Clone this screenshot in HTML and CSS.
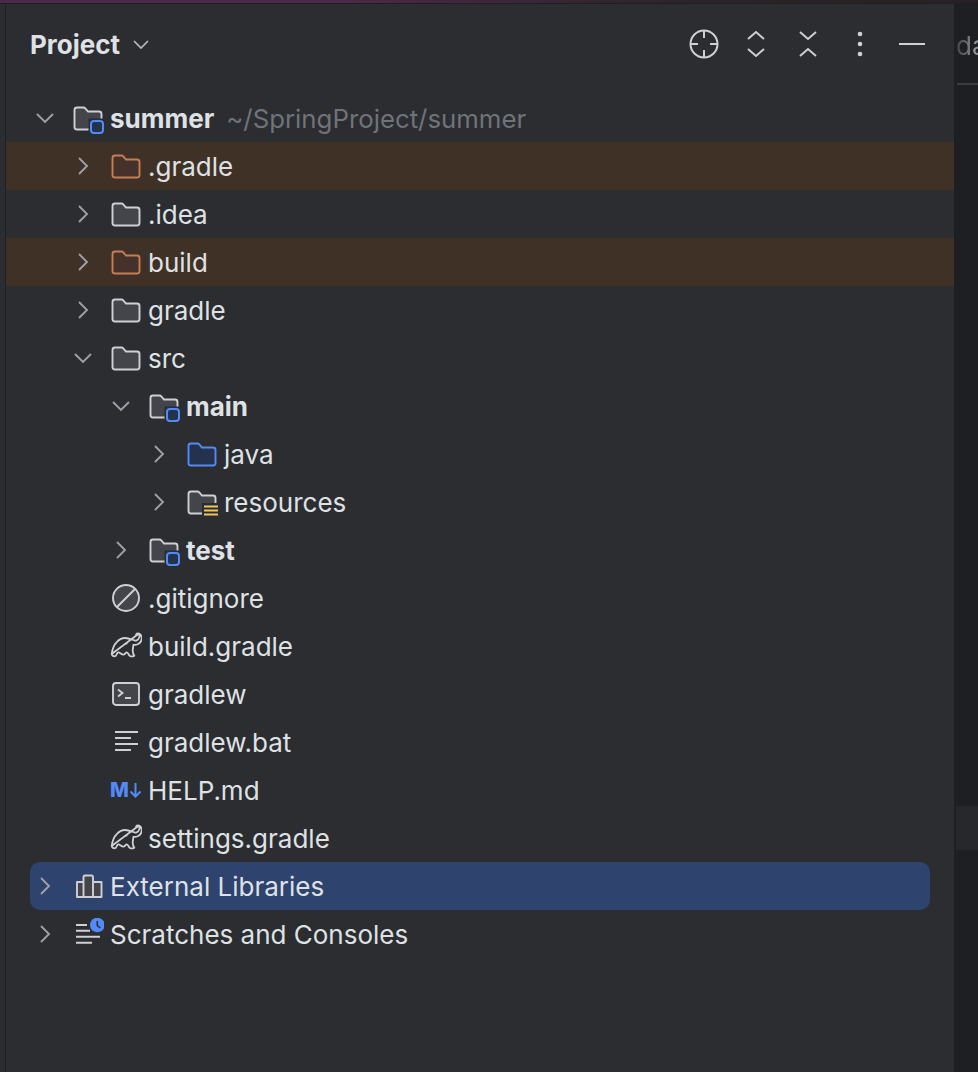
FILE: index.html
```html
<!DOCTYPE html>
<html lang="en">
<head>
<meta charset="utf-8">
<title>Project</title>
<link rel="stylesheet" href="styles.css">
</head>
<body>
<svg class="defs" width="0" height="0" aria-hidden="true">
  <defs>
    <path id="folder-shape" d="M2.500 8C2.500 6.600 3.600 5.500 5 5.500H11.500C12.200 5.500 12.800 5.800 13.300 6.300L16 9.500H27C28.400 9.500 29.500 10.600 29.500 12V25C29.500 26.400 28.400 27.500 27 27.500H5C3.600 27.500 2.500 26.400 2.500 25Z"/>
    <symbol id="i-folder" viewBox="0 0 32 32"><use href="#folder-shape" fill="#43454a" stroke="#ced0d6" stroke-width="1.900"/></symbol>
    <symbol id="i-folder-ex" viewBox="0 0 32 32"><use href="#folder-shape" fill="#45322b" stroke="#c77d55" stroke-width="1.900"/></symbol>
    <symbol id="i-folder-src" viewBox="0 0 32 32"><use href="#folder-shape" fill="#25324d" stroke="#548af7" stroke-width="1.900"/></symbol>
    <symbol id="i-module" viewBox="0 0 32 32">
      <use href="#folder-shape" fill="#43454a" stroke="#ced0d6" stroke-width="1.900"/>
      <rect x="16.500" y="16.500" width="17" height="17" fill="#2b2d30"/>
      <rect x="19" y="19" width="12" height="12" rx="3" fill="#25324d" stroke="#548af7" stroke-width="2"/>
    </symbol>
    <symbol id="i-res" viewBox="0 0 32 32">
      <use href="#folder-shape" fill="#43454a" stroke="#ced0d6" stroke-width="1.900"/>
      <rect x="16" y="17" width="18" height="17" fill="#2b2d30"/>
      <path d="M18 20.500H32M18 24.500H32M18 28.500H32" stroke="#f2c55c" stroke-width="2" fill="none"/>
    </symbol>
    <symbol id="i-ignore" viewBox="0 0 32 32">
      <circle cx="16" cy="16" r="13" fill="#43454a" stroke="#ced0d6" stroke-width="1.900"/>
      <path d="M7 25L25 7" stroke="#ced0d6" stroke-width="1.900"/>
    </symbol>
    <symbol id="i-gradle" viewBox="0 0 32 32">
      <path d="M1.700 24C2.500 19 4 14.500 6.700 12.300C9 9.500 12 8 15 8C18 8 20.500 9 23.300 10C25.500 11 28 11 29.300 7.300C29.800 5 28.800 3.300 27.700 3.300C27 3.300 26.300 3.800 26 4.700M29 3.500C30.500 4 31.700 6.500 31.700 9C31.700 11.500 30 13 28.300 14C26.500 15 25 15 23.300 15C23.300 17 22.700 19 22.700 20.700C22.700 22.500 23.500 24.500 24.300 25.700C22.500 26.800 21 26.500 20 26C18.500 25 18 22.300 16.700 22.300C15.500 22.300 15 24.700 13.300 24.700C11.500 24.700 10 22.300 8.300 22.300C7 22.300 6.500 26.300 5 26.300C3.500 26.300 2 25.500 1.700 24Z" fill="none" stroke="#ced0d6" stroke-width="1.800" stroke-linejoin="round" stroke-linecap="round"/>
      <circle cx="16.500" cy="13.500" r="1" fill="#ced0d6"/>
    </symbol>
    <symbol id="i-term" viewBox="0 0 32 32">
      <rect x="3" y="5" width="26" height="22" rx="3" fill="#43454a" stroke="#ced0d6" stroke-width="1.900"/>
      <path d="M8 11.500L12.500 15L8 18.500M15 20H21" fill="none" stroke="#ced0d6" stroke-width="1.900"/>
    </symbol>
    <symbol id="i-text" viewBox="0 0 32 32">
      <path d="M5 6H28M5 12H21M5 18H28M5 24H21" fill="none" stroke="#ced0d6" stroke-width="1.900"/>
    </symbol>
    <symbol id="i-md" viewBox="0 0 32 32">
      <path d="M25.500 9V22M20.500 17.500L25.500 22.500L30.500 17.500" fill="none" stroke="#548af7" stroke-width="2"/>
    </symbol>
    <symbol id="i-lib" viewBox="0 0 32 32">
      <path d="M5 12H11.500V27H5ZM11.500 7C11.500 6 12.500 5.500 13 5.500H19.500C20.500 5.500 21 6 21 7V27H11.500ZM21 12H29.500V27H21Z" fill="#43454a" stroke="#ced0d6" stroke-width="1.900" stroke-linejoin="round"/>
    </symbol>
    <symbol id="i-scratch" viewBox="0 0 32 32">
      <path d="M4 7H15M4 12.700H18M4 18.700H28M4 24.700H20" fill="none" stroke="#ced0d6" stroke-width="1.900"/>
      <circle cx="25.300" cy="7" r="7.300" fill="#548af7"/>
      <path d="M25.300 3V7.500L28.300 10" fill="none" stroke="#2b2d30" stroke-width="1.600"/>
    </symbol>
    <symbol id="c-right" viewBox="0 0 24 24"><path d="M8 4L16 12L8 20" fill="none" stroke="#9da0a8" stroke-width="1.900"/></symbol>
    <symbol id="c-down" viewBox="0 0 24 24"><path d="M4 8L12 16L20 8" fill="none" stroke="#9da0a8" stroke-width="1.900"/></symbol>
  </defs>
</svg>

<div class="strip-top"></div>
<div class="window">
  <div class="strip-left"></div>
  <main class="panel">
    <header class="head">
      <div class="head-title">
        <span class="title">Project</span>
        <svg class="title-caret" viewBox="0 0 16 10"><path d="M1 1L8 8L15 1" fill="none" stroke="#b4b8bf" stroke-width="1.700"/></svg>
      </div>
      <div class="tools">
        <svg class="tool" viewBox="0 0 32 32"><circle cx="16" cy="16" r="13.500" fill="none" stroke="#ced0d6" stroke-width="2"/><path d="M16 2.500V10M16 22V29.500M2.500 16H10M22 16H29.500" stroke="#ced0d6" stroke-width="2" fill="none"/></svg>
        <svg class="tool" viewBox="0 0 32 32"><path d="M8 11L16 4L24 11M8 21L16 28L24 21" fill="none" stroke="#ced0d6" stroke-width="2"/></svg>
        <svg class="tool" viewBox="0 0 32 32"><path d="M8 4L16 11L24 4M8 28L16 21L24 28" fill="none" stroke="#ced0d6" stroke-width="2"/></svg>
        <svg class="tool" viewBox="0 0 32 32"><circle cx="16" cy="6" r="2.300" fill="#ced0d6"/><circle cx="16" cy="16" r="2.300" fill="#ced0d6"/><circle cx="16" cy="26" r="2.300" fill="#ced0d6"/></svg>
        <svg class="tool" viewBox="0 0 32 32"><path d="M3 16H29" fill="none" stroke="#ced0d6" stroke-width="2"/></svg>
      </div>
    </header>

    <div class="tree">
      <div class="row d0"><svg class="chev"><use href="#c-down"/></svg><svg class="ico"><use href="#i-module"/></svg><span class="name bold">summer</span><span class="path">~/SpringProject/summer</span></div>
      <div class="row d1 excluded"><svg class="chev"><use href="#c-right"/></svg><svg class="ico"><use href="#i-folder-ex"/></svg><span class="name">.gradle</span></div>
      <div class="row d1"><svg class="chev"><use href="#c-right"/></svg><svg class="ico"><use href="#i-folder"/></svg><span class="name">.idea</span></div>
      <div class="row d1 excluded"><svg class="chev"><use href="#c-right"/></svg><svg class="ico"><use href="#i-folder-ex"/></svg><span class="name">build</span></div>
      <div class="row d1"><svg class="chev"><use href="#c-right"/></svg><svg class="ico"><use href="#i-folder"/></svg><span class="name">gradle</span></div>
      <div class="row d1"><svg class="chev"><use href="#c-down"/></svg><svg class="ico"><use href="#i-folder"/></svg><span class="name">src</span></div>
      <div class="row d2"><svg class="chev"><use href="#c-down"/></svg><svg class="ico"><use href="#i-module"/></svg><span class="name bold">main</span></div>
      <div class="row d3"><svg class="chev"><use href="#c-right"/></svg><svg class="ico"><use href="#i-folder-src"/></svg><span class="name">java</span></div>
      <div class="row d3"><svg class="chev"><use href="#c-right"/></svg><svg class="ico"><use href="#i-res"/></svg><span class="name">resources</span></div>
      <div class="row d2"><svg class="chev"><use href="#c-right"/></svg><svg class="ico"><use href="#i-module"/></svg><span class="name bold">test</span></div>
      <div class="row d1"><span class="chev"></span><svg class="ico"><use href="#i-ignore"/></svg><span class="name">.gitignore</span></div>
      <div class="row d1"><span class="chev"></span><svg class="ico"><use href="#i-gradle"/></svg><span class="name">build.gradle</span></div>
      <div class="row d1"><span class="chev"></span><svg class="ico"><use href="#i-term"/></svg><span class="name">gradlew</span></div>
      <div class="row d1"><span class="chev"></span><svg class="ico"><use href="#i-text"/></svg><span class="name">gradlew.bat</span></div>
      <div class="row d1"><span class="chev"></span><span class="ico md"><span class="md-m">M</span><svg class="md-arrow"><use href="#i-md"/></svg></span><span class="name">HELP.md</span></div>
      <div class="row d1"><span class="chev"></span><svg class="ico"><use href="#i-gradle"/></svg><span class="name">settings.gradle</span></div>
      <div class="row d0 selected"><svg class="chev"><use href="#c-right"/></svg><svg class="ico"><use href="#i-lib"/></svg><span class="name">External Libraries</span></div>
      <div class="row d0"><svg class="chev"><use href="#c-right"/></svg><svg class="ico"><use href="#i-scratch"/></svg><span class="name">Scratches and Consoles</span></div>
    </div>
  </main>
  <aside class="editor">
    <div class="tab-bar"><span class="tab-text">da</span></div>
    <div class="caret-line"></div>
  </aside>
</div>
</body>
</html>
```

FILE: styles.css
```css
* {
  box-sizing: border-box;
}

html,
body {
  margin: 0;
  height: 100%;
  background: #1e1f22;
  overflow: hidden;
}

body {
  display: flex;
  flex-direction: column;
  font-family: Inter, "Liberation Sans", sans-serif;
  color: #dfe1e5;
}

.defs {
  position: absolute;
}

.strip-top {
  flex: 0 0 3px;
  background: linear-gradient(90deg, #4a2a4a 0%, #4a2a46 35%, #2a2528 70%, #242224 100%);
}

.window {
  flex: 1;
  display: flex;
  min-height: 0;
  padding-top: 1px;
}

.strip-left {
  flex: 0 0 6px;
  background: linear-gradient(90deg, #2b2d30 0 5px, #1e1f22 5px);
}

.panel {
  flex: 0 0 948px;
  background: #2b2d30;
  display: flex;
  flex-direction: column;
}

.head {
  flex: 0 0 90px;
  display: flex;
  align-items: center;
  justify-content: space-between;
  padding: 0 26px 10px 24px;
}

.head-title {
  display: flex;
  align-items: center;
  gap: 13px;
}

.title {
  font-size: 26px;
  font-weight: 700;
  color: #dfe1e5;
}

.title-caret {
  width: 16px;
  height: 10px;
  margin-top: 2px;
}

.tools {
  display: flex;
  gap: 20px;
}

.tool {
  width: 32px;
  height: 32px;
}

.row {
  height: 48px;
  display: flex;
  align-items: center;
  font-size: 26px;
  white-space: nowrap;
}

.d0 { padding-left: 27px; }
.d1 { padding-left: 65px; }
.d2 { padding-left: 103px; }
.d3 { padding-left: 141px; }

.chev {
  flex: 0 0 24px;
  width: 24px;
  height: 24px;
  margin-right: 15px;
}

.ico {
  flex: 0 0 32px;
  width: 32px;
  height: 32px;
  margin-right: 6px;
}

.md {
  display: flex;
  align-items: center;
  position: relative;
}

.md-m {
  font-family: Inter, sans-serif;
  font-weight: 800;
  font-size: 20px;
  color: #548af7;
}

.md-arrow {
  position: absolute;
  left: 0;
  top: 0;
  width: 32px;
  height: 32px;
}

.name.bold {
  font-weight: 700;
}

.path {
  margin-left: 12px;
  font-size: 25.800px;
  color: #6f737a;
}

.excluded {
  background: #403126;
}

.selected {
  margin: 0 24px;
  padding-left: 3px;
  background: #2e436e;
  border-radius: 10px;
}

.editor {
  flex: 1;
  min-width: 0;
  position: relative;
  overflow: hidden;
}

.tab-bar {
  height: 81px;
  margin-left: 3px;
  border-bottom: 2px solid #3a3c40;
  font-size: 26px;
  color: #8c8f95;
  padding-top: 26px;
}

.tab-text {
  margin-left: -1px;
  display: inline-block;
  -webkit-mask-image: linear-gradient(90deg, rgba(0, 0, 0, 0.3) 0, #000 18px);
  mask-image: linear-gradient(90deg, rgba(0, 0, 0, 0.3) 0, #000 18px);
}

.caret-line {
  position: absolute;
  left: 2px;
  right: 0;
  top: 802px;
  height: 44px;
  background: #26282b;
}
```
